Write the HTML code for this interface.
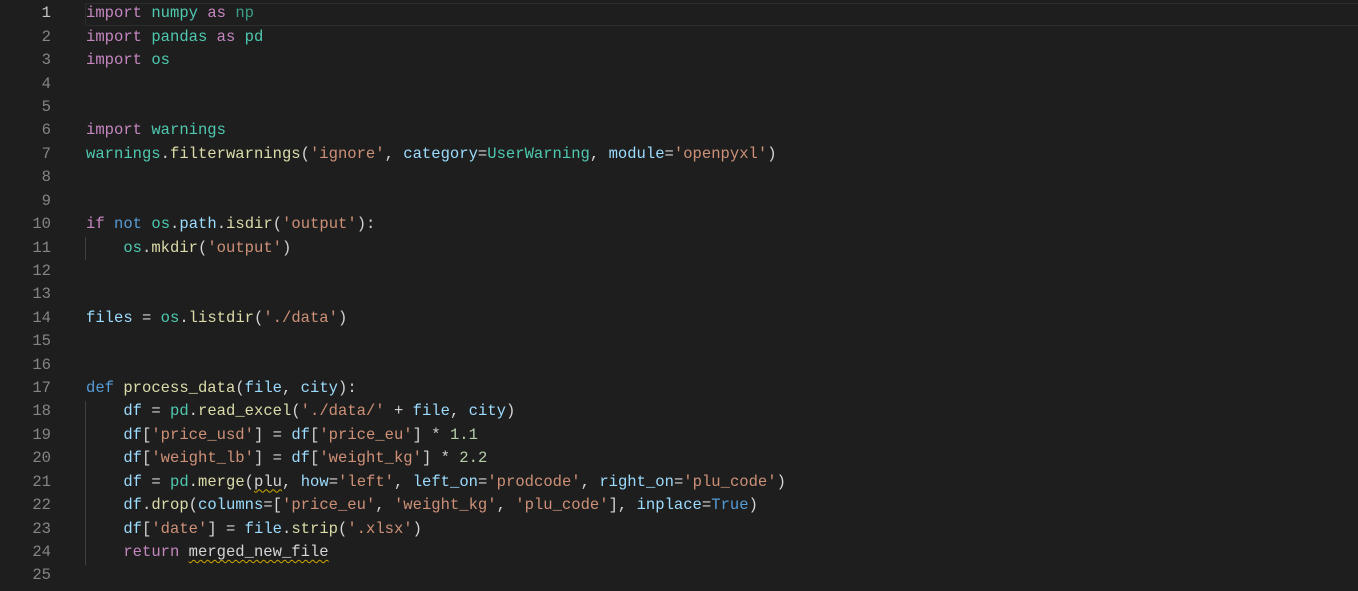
<!DOCTYPE html>
<html><head><meta charset="utf-8"><style>
html,body{margin:0;padding:0;background:#1e1e1e;width:1358px;height:591px;overflow:hidden}
.ed{position:relative;font-family:"Liberation Mono",monospace;font-size:15.55px;}
.ln{position:absolute;left:0;width:51px;text-align:right;color:#858585;line-height:23.42px;top:2.3px}
.code{position:absolute;left:86px;top:2.3px;line-height:23.42px;color:#d4d4d4;white-space:pre}
.hl{position:absolute;left:85px;right:0;top:3px;height:21px;border:1px solid #2c2c2c;border-right:none}
.g{position:absolute;left:85px;width:1px;background:#404040}
.k{color:#c586c0}.m{color:#4ec9b0}.n2{color:#3a9e88}.s{color:#ce9178}.f{color:#dcdcaa}.v{color:#9cdcfe}.b{color:#569cd6}.num{color:#b5cea8}
.sq{text-decoration:underline wavy #cca700;text-underline-offset:3px;text-decoration-thickness:1px}
</style></head><body><div class="ed">
<div class="hl"></div>
<div class="g" style="top:237px;height:23px"></div>
<div class="g" style="top:401px;height:164px"></div>
<div class="ln"><span style="color:#c6c6c6">1</span><br>2<br>3<br>4<br>5<br>6<br>7<br>8<br>9<br>10<br>11<br>12<br>13<br>14<br>15<br>16<br>17<br>18<br>19<br>20<br>21<br>22<br>23<br>24<br>25</div>
<div class="code"><span class="k">import</span> <span class="m">numpy</span> <span class="k">as</span> <span class="n2">np</span>
<span class="k">import</span> <span class="m">pandas</span> <span class="k">as</span> <span class="m">pd</span>
<span class="k">import</span> <span class="m">os</span>


<span class="k">import</span> <span class="m">warnings</span>
<span class="m">warnings</span>.<span class="f">filterwarnings</span>(<span class="s">'ignore'</span>, <span class="v">category</span>=<span class="m">UserWarning</span>, <span class="v">module</span>=<span class="s">'openpyxl'</span>)


<span class="k">if</span> <span class="b">not</span> <span class="m">os</span>.<span class="v">path</span>.<span class="f">isdir</span>(<span class="s">'output'</span>):
    <span class="m">os</span>.<span class="f">mkdir</span>(<span class="s">'output'</span>)


<span class="v">files</span> = <span class="m">os</span>.<span class="f">listdir</span>(<span class="s">'./data'</span>)


<span class="b">def</span> <span class="f">process_data</span>(<span class="v">file</span>, <span class="v">city</span>):
    <span class="v">df</span> = <span class="m">pd</span>.<span class="f">read_excel</span>(<span class="s">'./data/'</span> + <span class="v">file</span>, <span class="v">city</span>)
    <span class="v">df</span>[<span class="s">'price_usd'</span>] = <span class="v">df</span>[<span class="s">'price_eu'</span>] * <span class="num">1.1</span>
    <span class="v">df</span>[<span class="s">'weight_lb'</span>] = <span class="v">df</span>[<span class="s">'weight_kg'</span>] * <span class="num">2.2</span>
    <span class="v">df</span> = <span class="m">pd</span>.<span class="f">merge</span>(<span class="sq">plu</span>, <span class="v">how</span>=<span class="s">'left'</span>, <span class="v">left_on</span>=<span class="s">'prodcode'</span>, <span class="v">right_on</span>=<span class="s">'plu_code'</span>)
    <span class="v">df</span>.<span class="f">drop</span>(<span class="v">columns</span>=[<span class="s">'price_eu'</span>, <span class="s">'weight_kg'</span>, <span class="s">'plu_code'</span>], <span class="v">inplace</span>=<span class="b">True</span>)
    <span class="v">df</span>[<span class="s">'date'</span>] = <span class="v">file</span>.<span class="f">strip</span>(<span class="s">'.xlsx'</span>)
    <span class="k">return</span> <span class="sq">merged_new_file</span>
</div>
</div></body></html>
